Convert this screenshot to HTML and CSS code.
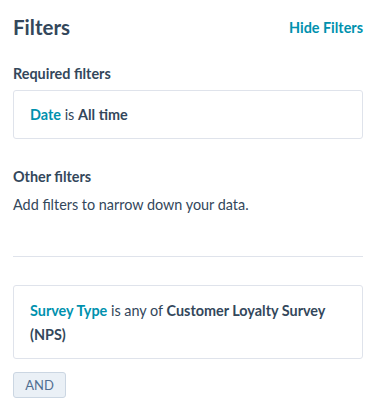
FILE: index.html
```html
<!DOCTYPE html>
<html>
<head>
<meta charset="utf-8">
<link rel="stylesheet" href="styles.css">
</head>
<body>
<div class="panel">
  <div class="header">
    <h2 class="title">Filters</h2>
    <a class="hide">Hide Filters</a>
  </div>
  <div class="section-label req">Required filters</div>
  <div class="card card-date"><span class="link">Date</span> is <b>All time</b></div>
  <div class="section-label other">Other filters</div>
  <div class="help">Add filters to narrow down your data.</div>
  <hr class="divider">
  <div class="card card-survey"><span class="link">Survey Type</span> is any of <b>Customer Loyalty Survey (NPS)</b></div>
  <button class="and">AND</button>
</div>
</body>
</html>
```
FILE: styles.css
```css
* { box-sizing: border-box; }
html, body { margin: 0; padding: 0; background: #fff; }
body { font-family: Lato, "Noto Sans", sans-serif; color: #33475b; }
.panel { width: 376px; padding: 0 13px 0 13px; }
.header { display: flex; justify-content: space-between; align-items: center; height: 54px; }
.title { margin: 0; font-size: 20.5px; font-weight: 700; }
.hide { color: #0091ae; font-size: 14.4px; font-weight: 700; }
.section-label { font-size: 14.4px; font-weight: 700; line-height: 24px; }
.req { margin-top: 8px; }
.card { border: 1px solid #dfe3eb; border-radius: 3px; font-size: 14.4px; line-height: 24px; padding: 12px 16px; margin-top: 4px; }
.card-date { height: 49px; padding-top: 12px; }
.card b { font-weight: 700; }
.link { color: #0091ae; font-weight: 700; }
.other { margin-top: 26px; }
.help { font-size: 14.4px; line-height: 24px; margin-top: 4px; }
.divider { border: 0; border-top: 1px solid #dfe3eb; margin: 39px 0 0 0; }
.card-survey { margin-top: 28px; height: 74px; padding-top: 13px; }
.and { display: block; margin-top: 13px; width: 53px; height: 26px; background: #eaf0f6; border: 1px solid #cbd6e2; border-radius: 3px; color: #506e91; font-family: inherit; font-size: 13px; padding: 0; }
```
